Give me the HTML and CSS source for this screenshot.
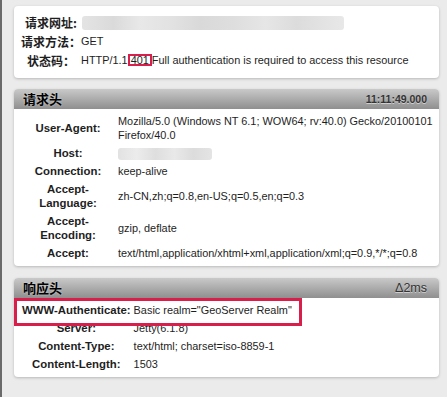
FILE: index.html
```html
<!DOCTYPE html>
<html>
<head>
<meta charset="utf-8">
<link rel="stylesheet" href="styles.css">
</head>
<body>
<div class="page">
  <div class="card summary">
    <table class="kv kv-summary">
      <tr><th>请求网址:</th><td><span class="blur blur-url"></span></td></tr>
      <tr><th>请求方法：</th><td>GET</td></tr>
      <tr><th>状态码：</th><td>HTTP/1.1 <span class="mark">401</span> Full authentication is required to access this resource</td></tr>
    </table>
  </div>

  <div class="panel">
    <div class="panel-head"><span class="title">请求头</span><span class="meta meta-bold">11:11:49.000</span></div>
    <div class="panel-body">
      <table class="kv kv-req">
        <tr><th>User-Agent:</th><td>Mozilla/5.0 (Windows NT 6.1; WOW64; rv:40.0) Gecko/20100101 Firefox/40.0</td></tr>
        <tr><th>Host:</th><td><span class="blur blur-host"></span></td></tr>
        <tr><th>Connection:</th><td>keep-alive</td></tr>
        <tr><th>Accept-Language:</th><td>zh-CN,zh;q=0.8,en-US;q=0.5,en;q=0.3</td></tr>
        <tr><th>Accept-Encoding:</th><td>gzip, deflate</td></tr>
        <tr><th>Accept:</th><td>text/html,application/xhtml+xml,application/xml;q=0.9,*/*;q=0.8</td></tr>
      </table>
    </div>
  </div>

  <div class="panel">
    <div class="panel-head"><span class="title">响应头</span><span class="meta">Δ2ms</span></div>
    <div class="panel-body resp-body">
      <table class="kv kv-resp">
        <tr><th>WWW-Authenticate:</th><td>Basic realm="GeoServer Realm"</td></tr>
        <tr><th>Server:</th><td>Jetty(6.1.8)</td></tr>
        <tr><th>Content-Type:</th><td>text/html; charset=iso-8859-1</td></tr>
        <tr><th>Content-Length:</th><td>1503</td></tr>
      </table>
      <div class="highlight"></div>
    </div>
  </div>
</div>
</body>
</html>
```

FILE: styles.css
```css
html, body {
  margin: 0;
  padding: 0;
}
body {
  background: #ebebeb;
  border-left: 2px solid #6a6a6a;
  min-height: 397px;
  box-sizing: border-box;
  font-family: "Liberation Sans", Arial, "Noto Sans CJK SC", sans-serif;
  font-size: 10.9px;
  color: #1e1e1e;
}
.page {
  padding: 6px 8px 0 12px;
  display: flex;
  flex-direction: column;
}
.card, .panel {
  background: #fff;
  border-radius: 4px;
  box-shadow: 0 1px 3px rgba(0,0,0,0.22);
}
.summary {
  padding: 7px 0 8px 7px;
}
.panel {
  margin-top: 11px;
}
.panel + .panel {
  margin-top: 12px;
}
.panel-head {
  height: 20px;
  display: flex;
  align-items: center;
  justify-content: space-between;
  padding: 0 12px 0 9px;
  border-radius: 4px 4px 0 0;
  background: linear-gradient(#c9c9c9, #8f8f8f);
}
.title {
  font-family: "Noto Sans CJK SC", sans-serif;
  font-weight: bold;
  font-size: 13px;
  color: #000;
  text-shadow: 0 0 2px rgba(255,255,255,0.6);
  line-height: 20px;
}
.meta {
  font-size: 12.5px;
  color: #333;
  text-shadow: 0 1px 0 rgba(255,255,255,0.5);
}
.meta-bold {
  font-weight: bold;
  font-size: 10.5px;
}
.panel-body {
  padding: 3px 4px 4px 0;
}
.resp-body {
  position: relative;
}
.kv {
  border-collapse: collapse;
}
.kv th {
  font-weight: bold;
  font-size: 11.4px;
  text-align: center;
  vertical-align: middle;
  line-height: 14px;
  padding: 2px;
}
.kv td {
  line-height: 14px;
  padding: 2px;
  vertical-align: middle;
}
.kv-summary th {
  font-family: "Noto Sans CJK SC", sans-serif;
  font-size: 12px;
  width: 60px;
  white-space: nowrap;
  padding: 0;
  line-height: 19px;
}
.kv-summary td {
  padding: 0;
  line-height: 19px;
  white-space: nowrap;
}
.kv-req {
  margin-left: 17px;
}
.kv-req th {
  width: 70px;
}
.kv-req td {
  padding-left: 13px;
}
.kv-resp {
  margin-left: 6px;
}
.kv-resp th {
  width: 108px;
  white-space: nowrap;
}
.kv-resp td {
  padding-left: 1px;
}
.blur {
  display: inline-block;
  vertical-align: middle;
  border-radius: 3px;
}
.blur-url {
  width: 262px;
  height: 14px;
  margin-left: 1px;
  background: linear-gradient(90deg, #e4e4e4 0%, #dadada 12%, #e8e8e8 22%, #e2e2e2 34%, #d9d9d9 45%, #dedede 58%, #e6e6e6 70%, #dcdcdc 82%, #e8e8e8 100%);
}
.blur-host {
  width: 94px;
  height: 12px;
  background: linear-gradient(90deg, #e2e2e2 0%, #ececec 20%, #dedede 40%, #e9e9e9 60%, #dcdcdc 80%, #e4e4e4 100%);
}
.mark {
  position: relative;
}
.mark::after {
  content: "";
  position: absolute;
  left: -3px;
  right: -3px;
  top: 0;
  bottom: 0;
  border: 2px solid #d81e4b;
}
.highlight {
  position: absolute;
  left: 0;
  top: 0;
  width: 282px;
  height: 22px;
  border: 3px solid #d81e4b;
}
```
